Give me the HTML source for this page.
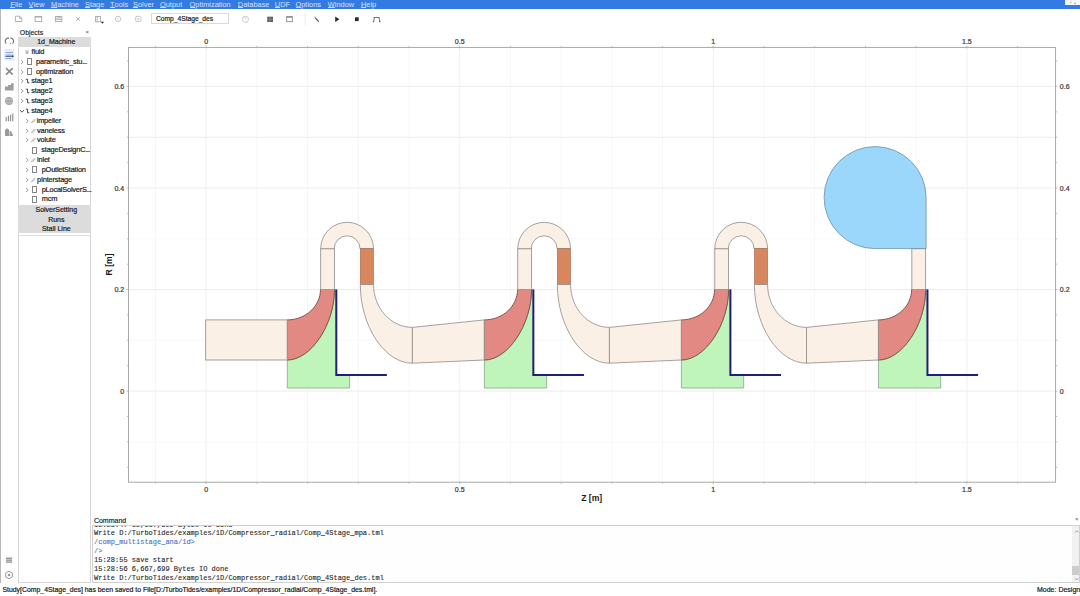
<!DOCTYPE html>
<html><head><meta charset="utf-8">
<style>
html,body{margin:0;padding:0;width:1080px;height:596px;overflow:hidden;background:#ffffff;font-family:"Liberation Sans",sans-serif;}
.a{position:absolute;white-space:nowrap;}
.plot{position:absolute;left:0;top:0;}
#menu{position:absolute;left:0;top:0;width:1080px;height:9.4px;background:#347ae3;}
#menu span{position:absolute;top:0.2px;font-size:7.4px;line-height:9px;color:#d6e4fc;}
#menu u{text-decoration:none;position:relative;}#menu u::after{content:"";position:absolute;left:0;right:0;top:7.1px;height:0.6px;background:#c8d8f6;}
.tb{position:absolute;top:15px;}
.tree{position:absolute;left:18px;top:37px;width:73px;height:546px;border:0.8px solid #d6d6d6;box-sizing:border-box;background:#fff;}
.row{position:absolute;font-size:7.4px;letter-spacing:-0.2px;line-height:10px;color:#1a1a1a;-webkit-text-stroke:0.2px #1a1a1a;}
.hdr{position:absolute;left:18px;width:73px;padding-left:3.6px;box-sizing:border-box;background:#dcdcdc;font-size:7px;text-align:center;color:#1a1a1a;-webkit-text-stroke:0.2px #1a1a1a;}
.cmd{position:absolute;left:92px;top:524.5px;width:988px;height:58.5px;border:0.8px solid #d0d0d0;box-sizing:border-box;background:#fefefe;overflow:hidden;}
.ln{position:absolute;left:1px;font-family:"Liberation Mono",monospace;font-size:7px;line-height:9px;color:#2a2a2a;-webkit-text-stroke:0.12px currentColor;margin-top:-0.6px;}
</style></head><body>
<svg class="plot" width="1080" height="596" viewBox="0 0 1080 596"><line x1="155.4" y1="47.4" x2="155.4" y2="482.2" stroke="#f6f6f6" stroke-width="1"/>
<line x1="206.1" y1="47.4" x2="206.1" y2="482.2" stroke="#f0f0f0" stroke-width="1"/>
<line x1="256.8" y1="47.4" x2="256.8" y2="482.2" stroke="#f6f6f6" stroke-width="1"/>
<line x1="307.5" y1="47.4" x2="307.5" y2="482.2" stroke="#f6f6f6" stroke-width="1"/>
<line x1="358.3" y1="47.4" x2="358.3" y2="482.2" stroke="#f6f6f6" stroke-width="1"/>
<line x1="409.0" y1="47.4" x2="409.0" y2="482.2" stroke="#f6f6f6" stroke-width="1"/>
<line x1="459.7" y1="47.4" x2="459.7" y2="482.2" stroke="#f0f0f0" stroke-width="1"/>
<line x1="510.4" y1="47.4" x2="510.4" y2="482.2" stroke="#f6f6f6" stroke-width="1"/>
<line x1="561.1" y1="47.4" x2="561.1" y2="482.2" stroke="#f6f6f6" stroke-width="1"/>
<line x1="611.9" y1="47.4" x2="611.9" y2="482.2" stroke="#f6f6f6" stroke-width="1"/>
<line x1="662.6" y1="47.4" x2="662.6" y2="482.2" stroke="#f6f6f6" stroke-width="1"/>
<line x1="713.3" y1="47.4" x2="713.3" y2="482.2" stroke="#f0f0f0" stroke-width="1"/>
<line x1="764.0" y1="47.4" x2="764.0" y2="482.2" stroke="#f6f6f6" stroke-width="1"/>
<line x1="814.7" y1="47.4" x2="814.7" y2="482.2" stroke="#f6f6f6" stroke-width="1"/>
<line x1="865.5" y1="47.4" x2="865.5" y2="482.2" stroke="#f6f6f6" stroke-width="1"/>
<line x1="916.2" y1="47.4" x2="916.2" y2="482.2" stroke="#f6f6f6" stroke-width="1"/>
<line x1="966.9" y1="47.4" x2="966.9" y2="482.2" stroke="#f0f0f0" stroke-width="1"/>
<line x1="1017.6" y1="47.4" x2="1017.6" y2="482.2" stroke="#f6f6f6" stroke-width="1"/>
<line x1="128.5" y1="441.9" x2="1055.6" y2="441.9" stroke="#f8f8f8" stroke-width="1"/>
<line x1="128.5" y1="391.1" x2="1055.6" y2="391.1" stroke="#ececec" stroke-width="1"/>
<line x1="128.5" y1="340.3" x2="1055.6" y2="340.3" stroke="#f8f8f8" stroke-width="1"/>
<line x1="128.5" y1="289.5" x2="1055.6" y2="289.5" stroke="#ececec" stroke-width="1"/>
<line x1="128.5" y1="238.8" x2="1055.6" y2="238.8" stroke="#f8f8f8" stroke-width="1"/>
<line x1="128.5" y1="188.0" x2="1055.6" y2="188.0" stroke="#ececec" stroke-width="1"/>
<line x1="128.5" y1="137.2" x2="1055.6" y2="137.2" stroke="#ececec" stroke-width="1"/>
<line x1="128.5" y1="86.4" x2="1055.6" y2="86.4" stroke="#ececec" stroke-width="1"/>
<rect x="205.7" y="319.9" width="81.60000000000002" height="40.1" fill="#faf0e6" stroke="#8f8a86" stroke-width="0.8"/>
<path d="M287.3,360.0 C310.8,360.0 334.5,324.7 334.5,289.4 L336.3,289.4 L336.3,374.9 L349.6,374.9 L349.6,388 L287.3,388 Z" fill="#bff4ba" stroke="#8aa58a" stroke-width="0.8"/>
<path d="M287.3,319.9 C305.56,319.9 320.5,306.17499999999995 320.5,289.4 L334.5,289.4 C334.5,324.7 310.8,360.0 287.3,360.0 Z" fill="#e38983" stroke="none"/>
<path d="M287.3,319.9 C305.56,319.9 320.5,306.17499999999995 320.5,289.4" fill="none" stroke="#6e5048" stroke-width="0.9"/>
<path d="M334.5,289.4 C334.5,324.7 310.8,360.0 287.3,360.0" fill="none" stroke="#6e5048" stroke-width="0.9"/>
<line x1="287.3" y1="319.9" x2="287.3" y2="360.0" stroke="#8f8a86" stroke-width="0.8"/>
<rect x="320.7" y="248.7" width="13.800000000000011" height="40.69999999999999" fill="#faf0e6" stroke="#8f8a86" stroke-width="0.8"/>
<path d="M320.70000000000005,248.7 A26.4,26.4 0 0 1 373.5,248.7 L360.0,248.7 A12.9,12.9 0 0 0 334.20000000000005,248.7 Z" fill="#faf0e6" stroke="#8f8a86" stroke-width="0.8"/>
<rect x="360.3" y="248.7" width="13.199999999999989" height="35.80000000000001" fill="#d8865e" stroke="#9a6a50" stroke-width="0.6"/>
<path d="M360.3,284.5 L373.5,284.5 C373.5,308.09499999999997 391.005,327.4 412.4,327.4 L412.4,363.2 C384.787,363.2 360.3,326.211 360.3,284.5 Z" fill="#faf0e6" stroke="#8f8a86" stroke-width="0.8"/>
<path d="M412.4,327.4 L484.35,319.9 L484.35,360.0 L412.4,363.2 Z" fill="#faf0e6" stroke="#8f8a86" stroke-width="0.8"/>
<path d="M336.3,289.4 L336.3,374.9 L386.9,374.9" fill="none" stroke="#221d7a" stroke-width="2"/>
<path d="M484.35,360.0 C507.85,360.0 531.55,324.7 531.55,289.4 L533.35,289.4 L533.35,374.9 L546.6500000000001,374.9 L546.6500000000001,388 L484.35,388 Z" fill="#bff4ba" stroke="#8aa58a" stroke-width="0.8"/>
<path d="M484.35,319.9 C502.61,319.9 517.55,306.17499999999995 517.55,289.4 L531.55,289.4 C531.55,324.7 507.85,360.0 484.35,360.0 Z" fill="#e38983" stroke="none"/>
<path d="M484.35,319.9 C502.61,319.9 517.55,306.17499999999995 517.55,289.4" fill="none" stroke="#6e5048" stroke-width="0.9"/>
<path d="M531.55,289.4 C531.55,324.7 507.85,360.0 484.35,360.0" fill="none" stroke="#6e5048" stroke-width="0.9"/>
<line x1="484.35" y1="319.9" x2="484.35" y2="360.0" stroke="#8f8a86" stroke-width="0.8"/>
<rect x="517.75" y="248.7" width="13.799999999999955" height="40.69999999999999" fill="#faf0e6" stroke="#8f8a86" stroke-width="0.8"/>
<path d="M517.7500000000001,248.7 A26.4,26.4 0 0 1 570.5500000000001,248.7 L557.0500000000001,248.7 A12.9,12.9 0 0 0 531.2500000000001,248.7 Z" fill="#faf0e6" stroke="#8f8a86" stroke-width="0.8"/>
<rect x="557.35" y="248.7" width="13.199999999999932" height="35.80000000000001" fill="#d8865e" stroke="#9a6a50" stroke-width="0.6"/>
<path d="M557.35,284.5 L570.55,284.5 C570.55,308.09499999999997 588.055,327.4 609.45,327.4 L609.45,363.2 C581.837,363.2 557.35,326.211 557.35,284.5 Z" fill="#faf0e6" stroke="#8f8a86" stroke-width="0.8"/>
<path d="M609.45,327.4 L681.4000000000001,319.9 L681.4000000000001,360.0 L609.45,363.2 Z" fill="#faf0e6" stroke="#8f8a86" stroke-width="0.8"/>
<path d="M533.35,289.4 L533.35,374.9 L583.95,374.9" fill="none" stroke="#221d7a" stroke-width="2"/>
<path d="M681.4000000000001,360.0 C704.9000000000001,360.0 728.6,324.7 728.6,289.4 L730.4000000000001,289.4 L730.4000000000001,374.9 L743.7,374.9 L743.7,388 L681.4000000000001,388 Z" fill="#bff4ba" stroke="#8aa58a" stroke-width="0.8"/>
<path d="M681.4000000000001,319.9 C699.6600000000001,319.9 714.6,306.17499999999995 714.6,289.4 L728.6,289.4 C728.6,324.7 704.9000000000001,360.0 681.4000000000001,360.0 Z" fill="#e38983" stroke="none"/>
<path d="M681.4000000000001,319.9 C699.6600000000001,319.9 714.6,306.17499999999995 714.6,289.4" fill="none" stroke="#6e5048" stroke-width="0.9"/>
<path d="M728.6,289.4 C728.6,324.7 704.9000000000001,360.0 681.4000000000001,360.0" fill="none" stroke="#6e5048" stroke-width="0.9"/>
<line x1="681.4000000000001" y1="319.9" x2="681.4000000000001" y2="360.0" stroke="#8f8a86" stroke-width="0.8"/>
<rect x="714.8" y="248.7" width="13.800000000000068" height="40.69999999999999" fill="#faf0e6" stroke="#8f8a86" stroke-width="0.8"/>
<path d="M714.8000000000001,248.7 A26.4,26.4 0 0 1 767.6,248.7 L754.1,248.7 A12.9,12.9 0 0 0 728.3000000000001,248.7 Z" fill="#faf0e6" stroke="#8f8a86" stroke-width="0.8"/>
<rect x="754.4000000000001" y="248.7" width="13.199999999999932" height="35.80000000000001" fill="#d8865e" stroke="#9a6a50" stroke-width="0.6"/>
<path d="M754.4000000000001,284.5 L767.6,284.5 C767.6,308.09499999999997 785.105,327.4 806.5,327.4 L806.5,363.2 C778.8870000000001,363.2 754.4000000000001,326.211 754.4000000000001,284.5 Z" fill="#faf0e6" stroke="#8f8a86" stroke-width="0.8"/>
<path d="M806.5,327.4 L878.45,319.9 L878.45,360.0 L806.5,363.2 Z" fill="#faf0e6" stroke="#8f8a86" stroke-width="0.8"/>
<path d="M730.4000000000001,289.4 L730.4000000000001,374.9 L781.0,374.9" fill="none" stroke="#221d7a" stroke-width="2"/>
<path d="M878.45,360.0 C901.95,360.0 925.6500000000001,324.7 925.6500000000001,289.4 L927.45,289.4 L927.45,374.9 L940.7500000000001,374.9 L940.7500000000001,388 L878.45,388 Z" fill="#bff4ba" stroke="#8aa58a" stroke-width="0.8"/>
<path d="M878.45,319.9 C896.71,319.9 911.6500000000001,306.17499999999995 911.6500000000001,289.4 L925.6500000000001,289.4 C925.6500000000001,324.7 901.95,360.0 878.45,360.0 Z" fill="#e38983" stroke="none"/>
<path d="M878.45,319.9 C896.71,319.9 911.6500000000001,306.17499999999995 911.6500000000001,289.4" fill="none" stroke="#6e5048" stroke-width="0.9"/>
<path d="M925.6500000000001,289.4 C925.6500000000001,324.7 901.95,360.0 878.45,360.0" fill="none" stroke="#6e5048" stroke-width="0.9"/>
<line x1="878.45" y1="319.9" x2="878.45" y2="360.0" stroke="#8f8a86" stroke-width="0.8"/>
<rect x="911.8500000000001" y="248.7" width="13.799999999999955" height="40.69999999999999" fill="#faf0e6" stroke="#8f8a86" stroke-width="0.8"/>
<path d="M926.1,248.6 L875.0,248.6 A51.0,51.0 0 1 1 926.1,197.6 Z" fill="#9bd7fa" stroke="#6f8fa8" stroke-width="0.8"/>
<path d="M927.45,289.4 L927.45,374.9 L978.0500000000001,374.9" fill="none" stroke="#221d7a" stroke-width="2"/>
<rect x="128.5" y="47.4" width="927.0999999999999" height="434.8" fill="none" stroke="#a0a0a0" stroke-width="0.9"/>
<line x1="155.4" y1="47.4" x2="155.4" y2="45.8" stroke="#a8a8a8" stroke-width="0.7"/>
<line x1="155.4" y1="482.2" x2="155.4" y2="483.8" stroke="#a8a8a8" stroke-width="0.7"/>
<line x1="206.1" y1="48.4" x2="206.1" y2="45.4" stroke="#a8a8a8" stroke-width="0.7"/>
<line x1="206.1" y1="481.2" x2="206.1" y2="484.2" stroke="#a8a8a8" stroke-width="0.7"/>
<line x1="256.8" y1="47.4" x2="256.8" y2="45.8" stroke="#a8a8a8" stroke-width="0.7"/>
<line x1="256.8" y1="482.2" x2="256.8" y2="483.8" stroke="#a8a8a8" stroke-width="0.7"/>
<line x1="307.5" y1="47.4" x2="307.5" y2="45.8" stroke="#a8a8a8" stroke-width="0.7"/>
<line x1="307.5" y1="482.2" x2="307.5" y2="483.8" stroke="#a8a8a8" stroke-width="0.7"/>
<line x1="358.3" y1="47.4" x2="358.3" y2="45.8" stroke="#a8a8a8" stroke-width="0.7"/>
<line x1="358.3" y1="482.2" x2="358.3" y2="483.8" stroke="#a8a8a8" stroke-width="0.7"/>
<line x1="409.0" y1="47.4" x2="409.0" y2="45.8" stroke="#a8a8a8" stroke-width="0.7"/>
<line x1="409.0" y1="482.2" x2="409.0" y2="483.8" stroke="#a8a8a8" stroke-width="0.7"/>
<line x1="459.7" y1="48.4" x2="459.7" y2="45.4" stroke="#a8a8a8" stroke-width="0.7"/>
<line x1="459.7" y1="481.2" x2="459.7" y2="484.2" stroke="#a8a8a8" stroke-width="0.7"/>
<line x1="510.4" y1="47.4" x2="510.4" y2="45.8" stroke="#a8a8a8" stroke-width="0.7"/>
<line x1="510.4" y1="482.2" x2="510.4" y2="483.8" stroke="#a8a8a8" stroke-width="0.7"/>
<line x1="561.1" y1="47.4" x2="561.1" y2="45.8" stroke="#a8a8a8" stroke-width="0.7"/>
<line x1="561.1" y1="482.2" x2="561.1" y2="483.8" stroke="#a8a8a8" stroke-width="0.7"/>
<line x1="611.9" y1="47.4" x2="611.9" y2="45.8" stroke="#a8a8a8" stroke-width="0.7"/>
<line x1="611.9" y1="482.2" x2="611.9" y2="483.8" stroke="#a8a8a8" stroke-width="0.7"/>
<line x1="662.6" y1="47.4" x2="662.6" y2="45.8" stroke="#a8a8a8" stroke-width="0.7"/>
<line x1="662.6" y1="482.2" x2="662.6" y2="483.8" stroke="#a8a8a8" stroke-width="0.7"/>
<line x1="713.3" y1="48.4" x2="713.3" y2="45.4" stroke="#a8a8a8" stroke-width="0.7"/>
<line x1="713.3" y1="481.2" x2="713.3" y2="484.2" stroke="#a8a8a8" stroke-width="0.7"/>
<line x1="764.0" y1="47.4" x2="764.0" y2="45.8" stroke="#a8a8a8" stroke-width="0.7"/>
<line x1="764.0" y1="482.2" x2="764.0" y2="483.8" stroke="#a8a8a8" stroke-width="0.7"/>
<line x1="814.7" y1="47.4" x2="814.7" y2="45.8" stroke="#a8a8a8" stroke-width="0.7"/>
<line x1="814.7" y1="482.2" x2="814.7" y2="483.8" stroke="#a8a8a8" stroke-width="0.7"/>
<line x1="865.5" y1="47.4" x2="865.5" y2="45.8" stroke="#a8a8a8" stroke-width="0.7"/>
<line x1="865.5" y1="482.2" x2="865.5" y2="483.8" stroke="#a8a8a8" stroke-width="0.7"/>
<line x1="916.2" y1="47.4" x2="916.2" y2="45.8" stroke="#a8a8a8" stroke-width="0.7"/>
<line x1="916.2" y1="482.2" x2="916.2" y2="483.8" stroke="#a8a8a8" stroke-width="0.7"/>
<line x1="966.9" y1="48.4" x2="966.9" y2="45.4" stroke="#a8a8a8" stroke-width="0.7"/>
<line x1="966.9" y1="481.2" x2="966.9" y2="484.2" stroke="#a8a8a8" stroke-width="0.7"/>
<line x1="1017.6" y1="47.4" x2="1017.6" y2="45.8" stroke="#a8a8a8" stroke-width="0.7"/>
<line x1="1017.6" y1="482.2" x2="1017.6" y2="483.8" stroke="#a8a8a8" stroke-width="0.7"/>
<line x1="128.5" y1="467.3" x2="126.9" y2="467.3" stroke="#a8a8a8" stroke-width="0.7"/>
<line x1="1055.6" y1="467.3" x2="1057.1999999999998" y2="467.3" stroke="#a8a8a8" stroke-width="0.7"/>
<line x1="128.5" y1="441.9" x2="126.9" y2="441.9" stroke="#a8a8a8" stroke-width="0.7"/>
<line x1="1055.6" y1="441.9" x2="1057.1999999999998" y2="441.9" stroke="#a8a8a8" stroke-width="0.7"/>
<line x1="128.5" y1="416.5" x2="126.9" y2="416.5" stroke="#a8a8a8" stroke-width="0.7"/>
<line x1="1055.6" y1="416.5" x2="1057.1999999999998" y2="416.5" stroke="#a8a8a8" stroke-width="0.7"/>
<line x1="128.5" y1="391.1" x2="126.5" y2="391.1" stroke="#a8a8a8" stroke-width="0.7"/>
<line x1="1055.6" y1="391.1" x2="1057.6" y2="391.1" stroke="#a8a8a8" stroke-width="0.7"/>
<line x1="128.5" y1="365.7" x2="126.9" y2="365.7" stroke="#a8a8a8" stroke-width="0.7"/>
<line x1="1055.6" y1="365.7" x2="1057.1999999999998" y2="365.7" stroke="#a8a8a8" stroke-width="0.7"/>
<line x1="128.5" y1="340.3" x2="126.9" y2="340.3" stroke="#a8a8a8" stroke-width="0.7"/>
<line x1="1055.6" y1="340.3" x2="1057.1999999999998" y2="340.3" stroke="#a8a8a8" stroke-width="0.7"/>
<line x1="128.5" y1="314.9" x2="126.9" y2="314.9" stroke="#a8a8a8" stroke-width="0.7"/>
<line x1="1055.6" y1="314.9" x2="1057.1999999999998" y2="314.9" stroke="#a8a8a8" stroke-width="0.7"/>
<line x1="128.5" y1="289.5" x2="126.5" y2="289.5" stroke="#a8a8a8" stroke-width="0.7"/>
<line x1="1055.6" y1="289.5" x2="1057.6" y2="289.5" stroke="#a8a8a8" stroke-width="0.7"/>
<line x1="128.5" y1="264.2" x2="126.9" y2="264.2" stroke="#a8a8a8" stroke-width="0.7"/>
<line x1="1055.6" y1="264.2" x2="1057.1999999999998" y2="264.2" stroke="#a8a8a8" stroke-width="0.7"/>
<line x1="128.5" y1="238.8" x2="126.9" y2="238.8" stroke="#a8a8a8" stroke-width="0.7"/>
<line x1="1055.6" y1="238.8" x2="1057.1999999999998" y2="238.8" stroke="#a8a8a8" stroke-width="0.7"/>
<line x1="128.5" y1="213.4" x2="126.9" y2="213.4" stroke="#a8a8a8" stroke-width="0.7"/>
<line x1="1055.6" y1="213.4" x2="1057.1999999999998" y2="213.4" stroke="#a8a8a8" stroke-width="0.7"/>
<line x1="128.5" y1="188.0" x2="126.5" y2="188.0" stroke="#a8a8a8" stroke-width="0.7"/>
<line x1="1055.6" y1="188.0" x2="1057.6" y2="188.0" stroke="#a8a8a8" stroke-width="0.7"/>
<line x1="128.5" y1="162.6" x2="126.9" y2="162.6" stroke="#a8a8a8" stroke-width="0.7"/>
<line x1="1055.6" y1="162.6" x2="1057.1999999999998" y2="162.6" stroke="#a8a8a8" stroke-width="0.7"/>
<line x1="128.5" y1="137.2" x2="126.9" y2="137.2" stroke="#a8a8a8" stroke-width="0.7"/>
<line x1="1055.6" y1="137.2" x2="1057.1999999999998" y2="137.2" stroke="#a8a8a8" stroke-width="0.7"/>
<line x1="128.5" y1="111.8" x2="126.9" y2="111.8" stroke="#a8a8a8" stroke-width="0.7"/>
<line x1="1055.6" y1="111.8" x2="1057.1999999999998" y2="111.8" stroke="#a8a8a8" stroke-width="0.7"/>
<line x1="128.5" y1="86.4" x2="126.5" y2="86.4" stroke="#a8a8a8" stroke-width="0.7"/>
<line x1="1055.6" y1="86.4" x2="1057.6" y2="86.4" stroke="#a8a8a8" stroke-width="0.7"/>
<line x1="128.5" y1="61.0" x2="126.9" y2="61.0" stroke="#a8a8a8" stroke-width="0.7"/>
<line x1="1055.6" y1="61.0" x2="1057.1999999999998" y2="61.0" stroke="#a8a8a8" stroke-width="0.7"/>
<g font-family="Liberation Sans, sans-serif" font-size="7" fill="#3a3a3a" stroke="#3a3a3a" stroke-width="0.22"><text x="206.1" y="43.9" text-anchor="middle">0</text><text x="206.1" y="491.8" text-anchor="middle">0</text><text x="459.7" y="43.9" text-anchor="middle">0.5</text><text x="459.7" y="491.8" text-anchor="middle">0.5</text><text x="713.3" y="43.9" text-anchor="middle">1</text><text x="713.3" y="491.8" text-anchor="middle">1</text><text x="966.9" y="43.9" text-anchor="middle">1.5</text><text x="966.9" y="491.8" text-anchor="middle">1.5</text><text x="124.2" y="393.6" text-anchor="end">0</text><text x="1059.8" y="393.6" text-anchor="start">0</text><text x="124.2" y="292.0" text-anchor="end">0.2</text><text x="1059.8" y="292.0" text-anchor="start">0.2</text><text x="124.2" y="190.5" text-anchor="end">0.4</text><text x="1059.8" y="190.5" text-anchor="start">0.4</text><text x="124.2" y="88.9" text-anchor="end">0.6</text><text x="1059.8" y="88.9" text-anchor="start">0.6</text></g>
<text x="591.7" y="500.9" text-anchor="middle" font-family="Liberation Sans, sans-serif" font-size="8.6" font-weight="bold" fill="#1a1a1a">Z [m]</text>
<text transform="translate(112.2,264.4) rotate(-90)" text-anchor="middle" font-family="Liberation Sans, sans-serif" font-size="8.6" font-weight="bold" fill="#1a1a1a">R [m]</text></svg>
<div id="menu">
<span style="left:10.4px"><u>F</u>ile</span>
<span style="left:28.5px"><u>V</u>iew</span>
<span style="left:51px"><u>M</u>achine</span>
<span style="left:85px"><u>S</u>tage</span>
<span style="left:110px"><u>T</u>ools</span>
<span style="left:133px"><u>S</u>olver</span>
<span style="left:160px"><u>O</u>utput</span>
<span style="left:189.6px"><u>O</u>ptimization</span>
<span style="left:237.8px"><u>D</u>atabase</span>
<span style="left:274.8px"><u>U</u>DF</span>
<span style="left:295.5px"><u>O</u>ptions</span>
<span style="left:327.8px"><u>W</u>indow</span>
<span style="left:361px"><u>H</u>elp</span>
<div class="a" style="left:1065px;top:0;width:15px;height:4.8px;background:#f4f6fb"></div><svg class="a" style="left:1065px;top:0" width="15" height="5" viewBox="0 0 15 5"><path d="M5,3.2 L6.5,1.8 M9,3.4 H11" stroke="#888" stroke-width="0.7"/></svg>
</div>
<div class="a" style="left:0;top:9px;width:1.2px;height:574px;background:#b8b8b8"></div>
<svg class="a" style="left:0;top:0" width="400" height="30" viewBox="0 0 400 30">
<g fill="none" stroke="#a8a8a8" stroke-width="0.9">
<path d="M15.4,16.2 H19.6 L21.8,18.3 V21.5 H15.4 Z M19.6,16.2 V18.3 H21.8"/>
<rect x="35.1" y="16.4" width="6.6" height="5.2"/>
<rect x="55.4" y="16.6" width="6.4" height="4.9"/>
<path d="M76.2,17.2 L80,20.6 M80,17.2 L76.2,20.6"/>
<rect x="95.6" y="16.5" width="4.8" height="5.4"/>
<circle cx="118" cy="18.9" r="2.7" stroke="#c0c0c0"/>
<rect x="135.6" y="16.3" width="5.4" height="5.2" rx="1.5" stroke="#c0c0c0"/>
<circle cx="245.4" cy="19.3" r="3.1" stroke="#c4c4c4"/>
<rect x="286.7" y="16.6" width="5.6" height="5.1" stroke="#8a8a8a"/>
<path d="M373.6,17.5 H379.8 M374.4,17.5 L373.6,21.5 M379,17.5 L379.8,21.5" stroke="#666"/>
</g>
<rect x="35.1" y="16.2" width="6.6" height="1.3" fill="#a8a8a8"/>
<rect x="55.4" y="18.6" width="6.4" height="1.2" fill="#a8a8a8"/>
<rect x="56.6" y="16.4" width="4" height="1.2" fill="#a8a8a8"/>
<path d="M97.2,16.5 V21.9" stroke="#a8a8a8" stroke-width="0.8"/>
<path d="M100.8,21.7 L104,21.7 L102.4,23.8 Z" fill="#222"/>
<path d="M118.7,17.7 L117.4,18.9 L118.7,20.1" fill="none" stroke="#c0c0c0" stroke-width="0.7"/>
<circle cx="138.3" cy="18.9" r="0.9" fill="#c0c0c0"/>
<path d="M244.3,18.4 Q244.4,17.3 245.4,17.3 Q246.5,17.3 246.4,18.4 Q246.3,19.1 245.4,19.5 V20.2" fill="none" stroke="#c4c4c4" stroke-width="0.6"/>
<rect x="267.2" y="16.7" width="5.8" height="5.3" fill="#5e5e5e"/>
<path d="M270.1,16.7 V22 M267.2,19.35 H273" stroke="#b0b0b0" stroke-width="0.45"/>
<rect x="286.7" y="16.4" width="5.6" height="1.3" fill="#8a8a8a"/>
<rect x="304.7" y="13" width="0.8" height="12" fill="#e6e6e6"/>
<path d="M315,17.6 L318.8,21.6" stroke="#555" stroke-width="1.2"/>
<path d="M314.2,16.4 L315.2,17.2 M316,16.2 L316,17" stroke="#999" stroke-width="0.5"/>
<path d="M335.2,16.6 L339.4,19.3 L335.2,22 Z" fill="#2a2a2a"/>
<rect x="355" y="17.3" width="3.7" height="3.8" fill="#2a2a2a"/>
<circle cx="373.6" cy="21.6" r="0.8" fill="#666"/><circle cx="379.8" cy="21.6" r="0.8" fill="#666"/>
</svg>
<div class="a" style="left:150.6px;top:13px;width:78px;height:10.6px;border:0.8px solid #dadada;box-sizing:border-box;background:#fff"></div>
<div class="a" style="left:155.9px;top:13px;font-size:6.7px;line-height:11px;color:#1a1a1a;-webkit-text-stroke:0.2px #1a1a1a">Comp_4Stage_des</div>
<svg class="a" style="left:0;top:30px" width="18" height="110" viewBox="0 30 18 110">
<rect x="3.9" y="49.2" width="10.6" height="11.3" fill="#e2edf9"/>
<g fill="none" stroke="#6e6e6e" stroke-width="1.1">
<path d="M8.6,38 A3.2,3.2 0 0 0 6.2,43.5"/>
<path d="M10.2,38 A3.2,3.2 0 0 1 12.6,43.5"/>
</g>
<path d="M7.6,37.4 L9.4,38 L8,39.2 Z M11.2,43.8 L9.4,44.2 L10.6,42.8 Z" fill="#6e6e6e"/>
<path d="M5.5,52.5 H13 M5.5,58.5 H11.5" stroke="#7f9ad6" stroke-width="0.8"/>
<path d="M5.5,56.2 H12.2" stroke="#2a3a5a" stroke-width="1"/>
<path d="M12,55 L14,56.2 L12,57.4 Z" fill="#2a3a5a"/>
<path d="M6.2,54.4 H12" stroke="#9fb4e0" stroke-width="0.7"/>
<path d="M6,68.2 L12.8,74.6 M12.8,68.2 L6,74.6" stroke="#8a8a8a" stroke-width="1.6"/>
<path d="M5,90.6 V86.5 L8,86.5 L8,85 L11,85 L11,83.2 L13.6,83.2 V90.6 Z" fill="#9e9e9e"/>
<circle cx="9" cy="101.1" r="4" fill="#a6a6a6"/>
<path d="M5.6,100 Q9,98.5 12.4,100 M5.6,102.4 Q9,104 12.4,102.4" stroke="#dcdcdc" stroke-width="0.6" fill="none"/>
<path d="M6.2,121.3 V117 M8.4,121.3 V115.8 M10.6,121.3 V114.8 M12.8,121.3 V113.5" stroke="#8a8a8a" stroke-width="1.1"/>
<path d="M5,136 V130 L7,128.3 L9,129.6 L9,136 Z M9.5,136 V131 L11,131 L13.2,136 Z" fill="#9a9a9a"/>
</svg>
<svg class="a" style="left:3.4px;top:553.5px" width="12" height="12" viewBox="0 0 12 12"><path d="M4,2.8 V9.2 M6,2.8 V9.2 M8,2.8 V9.2 M2.8,4.5 H9.2 M2.8,6.3 H9.2 M2.8,8.1 H9.2" stroke="#8a8a8a" stroke-width="0.8"/></svg>
<svg class="a" style="left:3.4px;top:569px" width="12" height="12" viewBox="0 0 12 12"><path d="M6,2.2 L9.3,4.1 V7.9 L6,9.8 L2.7,7.9 V4.1 Z" fill="none" stroke="#9a9a9a" stroke-width="1"/><circle cx="6" cy="6" r="1.3" fill="#9a9a9a"/></svg>
<div class="a" style="left:19.8px;top:28px;font-size:6.9px;line-height:9px;color:#222;-webkit-text-stroke:0.15px #222">Objects</div>
<div class="a" style="left:85.5px;top:28px;font-size:6px;line-height:9px;color:#555">&#215;</div>
<div class="tree"></div>
<div class="hdr" style="top:37px;height:9.6px;line-height:10.6px">1d_Machine</div>
<svg class="a" style="left:25.4px;top:48.9px" width="4" height="6" viewBox="0 0 4 6"><path d="M1,0.8 V4.5 H3 V0.8 M1,3 H3" fill="none" stroke="#888" stroke-width="0.6"/></svg>
<div class="row" style="left:31.6px;top:46.9px">fluid</div>
<svg class="a" style="left:18.5px;top:58.73px" width="6" height="6" viewBox="0 0 6 6"><path d="M2,1 L4.2,3 L2,5" fill="none" stroke="#8a8a8a" stroke-width="0.8"/></svg>
<div class="a" style="left:26.90px;top:58.03px;width:5px;height:7.3px;border:0.9px solid #858585;box-sizing:border-box"></div>
<div class="row" style="left:36.1px;top:56.73px">parametric_stu<span style="letter-spacing:-0.55px">...</span></div>
<svg class="a" style="left:18.5px;top:68.56px" width="6" height="6" viewBox="0 0 6 6"><path d="M2,1 L4.2,3 L2,5" fill="none" stroke="#8a8a8a" stroke-width="0.8"/></svg>
<div class="a" style="left:26.90px;top:67.86px;width:5px;height:7.3px;border:0.9px solid #858585;box-sizing:border-box"></div>
<div class="row" style="left:36.1px;top:66.56px">optimization</div>
<svg class="a" style="left:18.5px;top:78.39px" width="6" height="6" viewBox="0 0 6 6"><path d="M2,1 L4.2,3 L2,5" fill="none" stroke="#8a8a8a" stroke-width="0.8"/></svg>
<svg class="a" style="left:25.0px;top:78.39px" width="5" height="6" viewBox="0 0 5 6"><path d="M0.8,1.2 H2.6 V4.8 H4.4" fill="none" stroke="#333" stroke-width="0.9"/></svg>
<div class="row" style="left:31.3px;top:76.39px">stage1</div>
<svg class="a" style="left:18.5px;top:88.22px" width="6" height="6" viewBox="0 0 6 6"><path d="M2,1 L4.2,3 L2,5" fill="none" stroke="#8a8a8a" stroke-width="0.8"/></svg>
<svg class="a" style="left:25.0px;top:88.22px" width="5" height="6" viewBox="0 0 5 6"><path d="M0.8,1.2 H2.6 V4.8 H4.4" fill="none" stroke="#333" stroke-width="0.9"/></svg>
<div class="row" style="left:31.3px;top:86.22px">stage2</div>
<svg class="a" style="left:18.5px;top:98.05px" width="6" height="6" viewBox="0 0 6 6"><path d="M2,1 L4.2,3 L2,5" fill="none" stroke="#8a8a8a" stroke-width="0.8"/></svg>
<svg class="a" style="left:25.0px;top:98.05px" width="5" height="6" viewBox="0 0 5 6"><path d="M0.8,1.2 H2.6 V4.8 H4.4" fill="none" stroke="#333" stroke-width="0.9"/></svg>
<div class="row" style="left:31.3px;top:96.05px">stage3</div>
<svg class="a" style="left:19px;top:107.88px" width="6" height="6" viewBox="0 0 6 6"><path d="M1,2 L3,4.2 L5,2" fill="none" stroke="#444" stroke-width="0.9"/></svg>
<svg class="a" style="left:25.0px;top:107.88px" width="5" height="6" viewBox="0 0 5 6"><path d="M0.8,1.2 H2.6 V4.8 H4.4" fill="none" stroke="#333" stroke-width="0.9"/></svg>
<div class="row" style="left:31.3px;top:105.88px">stage4</div>
<svg class="a" style="left:24px;top:117.71000000000001px" width="6" height="6" viewBox="0 0 6 6"><path d="M2,1 L4.2,3 L2,5" fill="none" stroke="#8a8a8a" stroke-width="0.8"/></svg>
<svg class="a" style="left:30px;top:117.71000000000001px" width="6" height="6" viewBox="0 0 6 6"><path d="M1,5 L4.5,1 M2.5,5 L5.5,1.5" fill="none" stroke="#999" stroke-width="0.7"/></svg>
<div class="row" style="left:36.7px;top:115.71000000000001px">impeller</div>
<svg class="a" style="left:24px;top:127.53999999999999px" width="6" height="6" viewBox="0 0 6 6"><path d="M2,1 L4.2,3 L2,5" fill="none" stroke="#8a8a8a" stroke-width="0.8"/></svg>
<svg class="a" style="left:30px;top:127.53999999999999px" width="6" height="6" viewBox="0 0 6 6"><path d="M1,5 L4.5,1 M2.5,5 L5.5,1.5" fill="none" stroke="#999" stroke-width="0.7"/></svg>
<div class="row" style="left:37.1px;top:125.53999999999999px">vaneless</div>
<svg class="a" style="left:24px;top:137.37px" width="6" height="6" viewBox="0 0 6 6"><path d="M2,1 L4.2,3 L2,5" fill="none" stroke="#8a8a8a" stroke-width="0.8"/></svg>
<svg class="a" style="left:30px;top:137.37px" width="6" height="6" viewBox="0 0 6 6"><path d="M1,5 L4.5,1 M2.5,5 L5.5,1.5" fill="none" stroke="#999" stroke-width="0.7"/></svg>
<div class="row" style="left:37.1px;top:135.37px">volute</div>
<div class="a" style="left:32.10px;top:146.50px;width:5px;height:7.3px;border:0.9px solid #858585;box-sizing:border-box"></div>
<div class="row" style="left:41.3px;top:145.2px">stageDesignC<span style="letter-spacing:-0.55px">...</span></div>
<svg class="a" style="left:24px;top:157.03px" width="6" height="6" viewBox="0 0 6 6"><path d="M2,1 L4.2,3 L2,5" fill="none" stroke="#8a8a8a" stroke-width="0.8"/></svg>
<svg class="a" style="left:30px;top:157.03px" width="6" height="6" viewBox="0 0 6 6"><path d="M1,5 L4.5,1 M2.5,5 L5.5,1.5" fill="none" stroke="#999" stroke-width="0.7"/></svg>
<div class="row" style="left:37.1px;top:155.03px">inlet</div>
<svg class="a" style="left:24px;top:166.86px" width="6" height="6" viewBox="0 0 6 6"><path d="M2,1 L4.2,3 L2,5" fill="none" stroke="#8a8a8a" stroke-width="0.8"/></svg>
<div class="a" style="left:32.10px;top:166.16px;width:5px;height:7.3px;border:0.9px solid #858585;box-sizing:border-box"></div>
<div class="row" style="left:41.7px;top:164.86px">pOutletStation</div>
<svg class="a" style="left:24px;top:176.69px" width="6" height="6" viewBox="0 0 6 6"><path d="M2,1 L4.2,3 L2,5" fill="none" stroke="#8a8a8a" stroke-width="0.8"/></svg>
<svg class="a" style="left:30px;top:176.69px" width="6" height="6" viewBox="0 0 6 6"><path d="M1,5 L4.5,1 M2.5,5 L5.5,1.5" fill="none" stroke="#999" stroke-width="0.7"/></svg>
<div class="row" style="left:37.1px;top:174.69px">pInterstage</div>
<svg class="a" style="left:24px;top:186.52px" width="6" height="6" viewBox="0 0 6 6"><path d="M2,1 L4.2,3 L2,5" fill="none" stroke="#8a8a8a" stroke-width="0.8"/></svg>
<div class="a" style="left:32.10px;top:185.82px;width:5px;height:7.3px;border:0.9px solid #858585;box-sizing:border-box"></div>
<div class="row" style="left:41.7px;top:184.52px">pLocalSolverS<span style="letter-spacing:-0.55px">...</span></div>
<div class="a" style="left:32.10px;top:195.65px;width:5px;height:7.3px;border:0.9px solid #858585;box-sizing:border-box"></div>
<div class="row" style="left:41.7px;top:194.35px">mcm</div>
<div class="hdr" style="top:204.6px;height:28.7px;line-height:9.7px;padding-top:0.3px">SolverSetting<br>Runs<br>Stall Line</div>
<div class="a" style="left:18px;top:234.6px;width:73px;height:0.8px;background:#dedede"></div>
<div class="a" style="left:93.9px;top:516px;font-size:7px;line-height:9px;color:#1a1a1a;-webkit-text-stroke:0.15px #1a1a1a">Command</div>
<div class="a" style="left:1075px;top:515px;font-size:6px;line-height:9px;color:#555">&#215;</div>
<div class="cmd">
<div class="ln" style="top:-4px">15:28:47 12,517,699 Bytes IO done</div>
<div class="ln" style="top:4px">Write D:/TurboTides/examples/1D/Compressor_radial/Comp_4Stage_mpa.tml</div>
<div class="ln" style="top:13px;color:#4a78c8">/comp_multistage_ana/1d&gt;</div>
<div class="ln" style="top:22px;color:#4a78c8">/&gt;</div>
<div class="ln" style="top:31px">15:28:55 save start</div>
<div class="ln" style="top:40px">15:28:56 6,667,699 Bytes IO done</div>
<div class="ln" style="top:49px">Write D:/TurboTides/examples/1D/Compressor_radial/Comp_4Stage_des.tml</div>
<div class="a" style="left:979px;top:0;width:9px;height:58px;background:#f1f1f1"></div><svg class="a" style="left:979px;top:0" width="9" height="58" viewBox="0 0 9 58"><path d="M3,6.4 L4.6,4.8 L6.2,6.4" fill="none" stroke="#777" stroke-width="0.7"/><path d="M3,52.3 L4.6,53.9 L6.2,52.3" fill="none" stroke="#777" stroke-width="0.7"/></svg>
<div class="a" style="left:979px;top:40px;width:9px;height:9px;background:#cdcdcd"></div>
</div>
<div class="a" style="left:2.4px;top:584.5px;font-size:6.9px;line-height:10px;color:#1a1a1a;-webkit-text-stroke:0.2px #1a1a1a">Study[Comp_4Stage_des] has been saved to File[D:/TurboTides/examples/1D/Compressor_radial/Comp_4Stage_des.tml].</div>
<div class="a" style="left:1037px;top:584.5px;font-size:7px;line-height:10px;color:#1a1a1a;-webkit-text-stroke:0.2px #1a1a1a">Mode: Design</div>
</body></html>
